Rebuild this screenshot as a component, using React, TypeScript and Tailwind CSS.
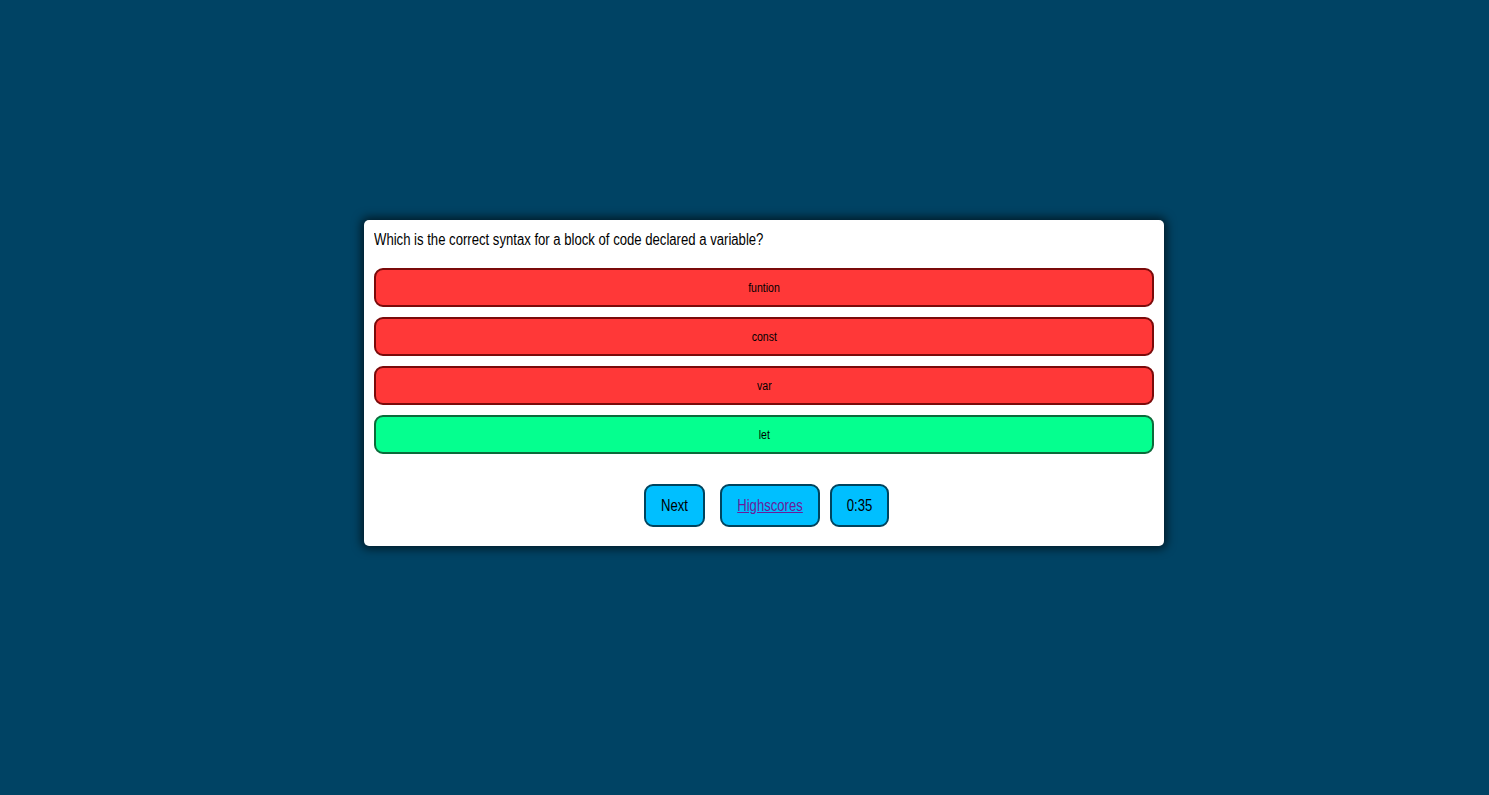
const answers = [
  { text: "funtion", correct: false },
  { text: "const", correct: false },
  { text: "var", correct: false },
  { text: "let", correct: true },
]

export default function App() {
  return (
    <div className="min-h-screen w-full bg-[#004364] flex items-start justify-center pl-[39px] pt-[220px] font-['Liberation_Sans',Arial,sans-serif]">
      <div className="w-[800px] bg-white rounded-[5px] shadow-[0_0_10px_3px_rgba(0,0,0,0.6)] px-[10px] pt-[10px] pb-[19px]">
        <p className="text-[16px] leading-[20px] text-black whitespace-nowrap">
          <span className="inline-block origin-left scale-x-[0.82]">
            Which is the correct syntax for a block of code declared a variable?
          </span>
        </p>
        <div className="mt-[18px] flex flex-col gap-[10px]">
          {answers.map((a) => (
            <button
              key={a.text}
              className={
                a.correct
                  ? "h-[39px] w-full rounded-[9px] border-2 border-[#0b6b3a] bg-[#05ff8f] text-[12px] text-black"
                  : "h-[39px] w-full rounded-[9px] border-2 border-[#7a0a0a] bg-[#ff3838] text-[12px] text-black"
              }
            >
              <span className="inline-block scale-x-[0.88]">{a.text}</span>
            </button>
          ))}
        </div>
        <div className="mt-[30px] flex justify-center items-center pl-[5px]">
          <button className="h-[43px] w-[61px] flex items-center justify-center rounded-[9px] border-2 border-[#00445e] bg-[#00bfff] text-[16px] text-black">
            <span className="inline-block scale-x-[0.82]">Next</span>
          </button>
          <button className="ml-[15px] h-[43px] w-[100px] flex items-center justify-center rounded-[9px] border-2 border-[#00445e] bg-[#00bfff] text-[16px]">
            <a href="#" className="inline-block scale-x-[0.82] underline text-[#6a1b9a]">Highscores</a>
          </button>
          <div className="ml-[10px] h-[43px] w-[59px] flex items-center justify-center rounded-[9px] border-2 border-[#00445e] bg-[#00bfff] text-[16px] text-black">
            <span className="inline-block scale-x-[0.82]">0:35</span>
          </div>
        </div>
      </div>
    </div>
  )
}
